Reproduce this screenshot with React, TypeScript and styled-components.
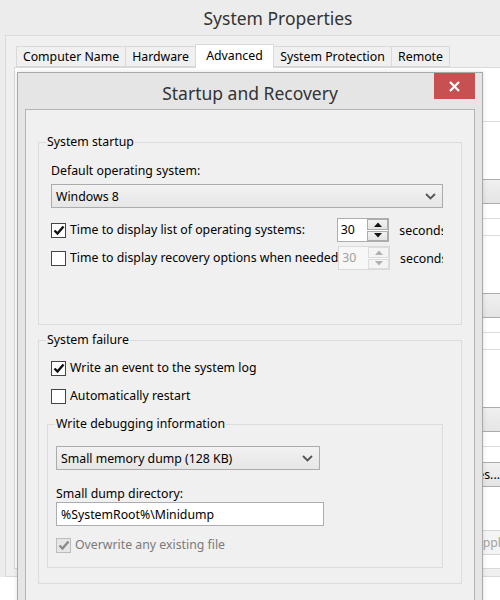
import React from "react";
import styled, { createGlobalStyle } from "styled-components";

const GlobalStyle = createGlobalStyle`
  html, body {
    margin: 0;
    padding: 0;
    background: #ffffff;
  }
  * {
    box-sizing: border-box;
  }
`;

const Desktop = styled.div`
  position: relative;
  width: 500px;
  height: 600px;
  overflow: hidden;
  background: #ffffff;
  font-family: "Noto Sans", "Open Sans", sans-serif;
  font-size: 12.3px;
  color: #000000;
`;

/* ---------- System Properties (window behind) ---------- */

const Window = styled.div`
  position: absolute;
  left: 0;
  top: 0;
  width: 640px;
  height: 577px;
  display: flex;
  flex-direction: column;
  background: #ececec;
`;

const WindowTitle = styled.div`
  height: 35px;
  display: flex;
  align-items: center;
  justify-content: center;
  padding-right: 84px;
  font-size: 17.5px;
  color: #333333;
`;

const WindowClient = styled.div`
  flex: 1;
  display: flex;
  flex-direction: column;
  margin-left: 5px;
  padding: 8px 0 7px 8px;
  background: #f0f0f0;
  border-top: 1px solid #dadada;
  border-left: 1px solid #dadada;
  border-bottom: 1px solid #dadada;
`;

const TabStrip = styled.div`
  display: flex;
  align-items: flex-end;
  height: 23px;
  padding-left: 2px;
  position: relative;
  z-index: 1;
`;

const Tab = styled.div<{ $active?: boolean; $width: number }>`
  width: ${({ $width }) => $width}px;
  height: ${({ $active }) => ($active ? "24px" : "21px")};
  margin-bottom: ${({ $active }) => ($active ? "-1px" : "0")};
  margin-left: -1px;
  padding-bottom: ${({ $active }) => ($active ? "3px" : "0")};
  display: flex;
  align-items: center;
  justify-content: center;
  border: 1px solid #d9d9d9;
  border-bottom: ${({ $active }) => ($active ? "none" : "1px solid #d9d9d9")};
  background: ${({ $active }) => ($active ? "#ffffff" : "#f0f0f0")};
  white-space: nowrap;

  &:first-child {
    margin-left: 0;
  }
`;

const TabPanel = styled.div`
  flex: 1;
  display: flex;
  flex-direction: column;
  margin-right: 8px;
  padding: 0 12px;
  background: #ffffff;
  border: 1px solid #d9d9d9;
`;

const PanelGroup = styled.div<{ $top: number }>`
  height: 98px;
  margin-top: ${({ $top }) => $top}px;
  display: flex;
  align-items: flex-end;
  justify-content: flex-end;
  padding: 0 10px 14px;
  border: 1px solid #dcdcdc;
`;

const PushButton = styled.div<{ $left?: number; $top?: number; $width: number; $disabled?: boolean }>`
  width: ${({ $width }) => $width}px;
  height: 25px;
  margin-top: ${({ $top }) => $top ?? 0}px;
  margin-left: ${({ $left }) => ($left === undefined ? "0" : `${$left}px`)};
  align-self: ${({ $left }) => ($left === undefined ? "auto" : "flex-start")};
  display: flex;
  align-items: center;
  justify-content: center;
  white-space: nowrap;
  color: ${({ $disabled }) => ($disabled ? "#a3a3a3" : "#000000")};
  border: 1px solid ${({ $disabled }) => ($disabled ? "#d5d5d5" : "#acacac")};
  background: ${({ $disabled }) =>
    $disabled ? "#f4f4f4" : "linear-gradient(#f0f0f0, #e5e5e5)"};
`;

/* ---------- Startup and Recovery dialog ---------- */

const Dialog = styled.section`
  position: absolute;
  left: 17px;
  top: 72px;
  width: 466px;
  height: 540px;
  display: flex;
  flex-direction: column;
  padding: 0 7px 7px;
  background: #e5e5e5;
  border: 1px solid #a9a9a9;
  box-shadow: 0 0 5px rgba(0, 0, 0, 0.12);
`;

const TitleBar = styled.header`
  height: 36px;
  display: grid;
  grid-template-columns: 1fr auto 1fr;
  align-items: center;
`;

const DialogTitle = styled.h1`
  grid-column: 2;
  margin: 0;
  padding-top: 3px;
  font-size: 17.5px;
  font-weight: 400;
  color: #333333;
  white-space: nowrap;
`;

const CloseButton = styled.div`
  grid-column: 3;
  justify-self: end;
  align-self: start;
  width: 41px;
  height: 26px;
  display: flex;
  align-items: center;
  justify-content: center;
  background: #c75050;
`;

const DialogClient = styled.div`
  flex: 1;
  display: flex;
  flex-direction: column;
  padding: 32px 12px 0;
  background: #f0f0f0;
  border: 1px solid #b4b4b4;
`;

const GroupBox = styled.div<{ $pad: string; $top?: number }>`
  display: flex;
  flex-direction: column;
  margin-top: ${({ $top }) => $top ?? 0}px;
  padding: ${({ $pad }) => $pad};
  border: 1px solid #dcdcdc;
`;

const Legend = styled.div<{ $shift: number }>`
  align-self: flex-start;
  height: 18px;
  margin: -10px 0 0 ${({ $shift }) => $shift}px;
  padding: 0 1px;
  line-height: 18px;
  background: #f0f0f0;
`;

const FieldLabel = styled.div<{ $top: number }>`
  margin-top: ${({ $top }) => $top}px;
  line-height: 16px;
  height: 16px;
`;

const ComboBox = styled.div<{ $top: number; $width?: number }>`
  width: ${({ $width }) => ($width ? `${$width}px` : "100%")};
  height: 24px;
  margin-top: ${({ $top }) => $top}px;
  display: flex;
  align-items: center;
  justify-content: space-between;
  padding: 0 6px 0 4px;
  border: 1px solid #acacac;
  background: linear-gradient(#f2f2f2, #e6e6e6);
`;

const SpinRow = styled.div<{ $top: number }>`
  height: 24px;
  margin-top: ${({ $top }) => $top}px;
  display: flex;
  align-items: center;
`;

const CheckRow = styled.label<{ $top: number; $indent?: number; $disabled?: boolean; $width?: number }>`
  display: flex;
  align-items: center;
  gap: 4px;
  height: 18px;
  width: ${({ $width }) => ($width ? `${$width}px` : "auto")};
  margin-top: ${({ $top }) => $top}px;
  margin-left: ${({ $indent }) => $indent ?? 0}px;
  line-height: 18px;
  white-space: nowrap;
  color: ${({ $disabled }) => ($disabled ? "#7a7a7a" : "#000000")};
`;

const Box = styled.span<{ $disabled?: boolean }>`
  flex: none;
  width: 15px;
  height: 15px;
  display: flex;
  align-items: center;
  justify-content: center;
  border: 1px solid ${({ $disabled }) => ($disabled ? "#bcbcbc" : "#444444")};
  background: ${({ $disabled }) => ($disabled ? "#e6e6e6" : "#ffffff")};
`;

const Spin = styled.div<{ $disabled?: boolean }>`
  width: 53px;
  height: 100%;
  display: flex;
  border: 1px solid ${({ $disabled }) => ($disabled ? "#d9d9d9" : "#abadb3")};
  background: ${({ $disabled }) => ($disabled ? "#f7f7f7" : "#ffffff")};
  color: ${({ $disabled }) => ($disabled ? "#a0a0a0" : "#000000")};
`;

const SpinValue = styled.div`
  flex: 1;
  padding-left: 3px;
  line-height: 22px;
`;

const SpinButtons = styled.div`
  width: 21px;
  display: flex;
  flex-direction: column;
  gap: 1px;
`;

const SpinButton = styled.div<{ $disabled?: boolean }>`
  flex: 1;
  display: flex;
  align-items: center;
  justify-content: center;
  border: 1px solid ${({ $disabled }) => ($disabled ? "#dddddd" : "#acacac")};
  background: ${({ $disabled }) =>
    $disabled ? "#f4f4f4" : "linear-gradient(#f2f2f2, #e4e4e4)"};
`;

const Seconds = styled.div`
  width: 44px;
  margin-left: 10px;
  overflow: hidden;
  white-space: nowrap;
`;

const TextField = styled.input`
  width: 268px;
  height: 24px;
  margin: 0;
  padding: 0 0 0 4px;
  font: inherit;
  color: #000000;
  border: 1px solid #abadb3;
  background: #ffffff;
  outline: none;
`;

const Chevron = () => (
  <svg width="11" height="7" viewBox="0 0 11 7">
    <path d="M1 1 L5.5 5.5 L10 1" fill="none" stroke="#555555" strokeWidth="1.8" />
  </svg>
);

const CheckMark = ({ color }: { color: string }) => (
  <svg width="12" height="11" viewBox="0 0 12 11">
    <path d="M1.5 5.5 L4.5 8.5 L10.5 1.5" fill="none" stroke={color} strokeWidth="2.4" />
  </svg>
);

const Checkbox = ({ checked, disabled }: { checked?: boolean; disabled?: boolean }) => (
  <Box $disabled={disabled}>
    {checked && <CheckMark color={disabled ? "#8a8a8a" : "#111111"} />}
  </Box>
);

const Arrow = ({ up, color }: { up?: boolean; color: string }) => (
  <svg width="8" height="5" viewBox="0 0 8 5">
    <polygon points={up ? "0,5 4,0.5 8,5" : "0,0 8,0 4,4.5"} fill={color} />
  </svg>
);

const SpinBox = ({ value, disabled }: { value: string; disabled?: boolean }) => {
  const arrow = disabled ? "#b0b0b0" : "#111111";
  return (
    <Spin $disabled={disabled}>
      <SpinValue>{value}</SpinValue>
      <SpinButtons>
        <SpinButton $disabled={disabled}>
          <Arrow up color={arrow} />
        </SpinButton>
        <SpinButton $disabled={disabled}>
          <Arrow color={arrow} />
        </SpinButton>
      </SpinButtons>
    </Spin>
  );
};

export default function App() {
  return (
    <Desktop>
      <GlobalStyle />

      <Window>
        <WindowTitle>System Properties</WindowTitle>
        <WindowClient>
          <TabStrip>
            <Tab $width={110}>Computer Name</Tab>
            <Tab $width={71}>Hardware</Tab>
            <Tab $width={79} $active>Advanced</Tab>
            <Tab $width={119}>System Protection</Tab>
            <Tab $width={59}>Remote</Tab>
          </TabStrip>
          <TabPanel>
            <PanelGroup $top={53}>
              <PushButton $width={130} />
            </PanelGroup>
            <PanelGroup $top={16}>
              <PushButton $width={130} />
            </PanelGroup>
            <PanelGroup $top={16}>
              <PushButton $width={130} />
            </PanelGroup>
            <PushButton $top={15} $left={323} $width={160}>
              Environment Variables...
            </PushButton>
            <PushButton $top={43} $left={421} $width={86} $disabled>
              Apply
            </PushButton>
          </TabPanel>
        </WindowClient>
      </Window>

      <Dialog>
        <TitleBar>
          <DialogTitle>Startup and Recovery</DialogTitle>
          <CloseButton>
            <svg width="11" height="11" viewBox="0 0 11 11">
              <path d="M1 1 L10 10 M10 1 L1 10" stroke="#ffffff" strokeWidth="2.2" />
            </svg>
          </CloseButton>
        </TitleBar>

        <DialogClient>
          <GroupBox $pad="0 18px 54px 12px">
            <Legend $shift={-5}>System startup</Legend>
            <FieldLabel $top={12}>Default operating system:</FieldLabel>
            <ComboBox $top={5}>
              <span>Windows 8</span>
              <Chevron />
            </ComboBox>
            <SpinRow $top={10}>
              <CheckRow $top={0} $width={288}>
                <Checkbox checked />
                Time to display list of operating systems:
              </CheckRow>
              <SpinBox value="30" />
              <Seconds>seconds</Seconds>
            </SpinRow>
            <SpinRow $top={4}>
              <CheckRow $top={0} $width={288}>
                <Checkbox />
                Time to display recovery options when needed
              </CheckRow>
              <SpinBox value="30" disabled />
              <Seconds>seconds</Seconds>
            </SpinRow>
          </GroupBox>

          <GroupBox $pad="0 18px 15px 8px" $top={15}>
            <Legend $shift={-1}>System failure</Legend>
            <CheckRow $top={10} $indent={4}>
              <Checkbox checked />
              Write an event to the system log
            </CheckRow>
            <CheckRow $top={10} $indent={4}>
              <Checkbox />
              Automatically restart
            </CheckRow>

            <GroupBox $pad="0 8px 13px 8px" $top={19}>
              <Legend $shift={-1}>Write debugging information</Legend>
              <ComboBox $top={13} $width={264}>
                <span>Small memory dump (128 KB)</span>
                <Chevron />
              </ComboBox>
              <FieldLabel $top={16}>Small dump directory:</FieldLabel>
              <TextField readOnly value="%SystemRoot%\Minidump" />
              <CheckRow $top={10} $disabled>
                <Checkbox checked disabled />
                Overwrite any existing file
              </CheckRow>
            </GroupBox>
          </GroupBox>
        </DialogClient>
      </Dialog>
    </Desktop>
  );
}
